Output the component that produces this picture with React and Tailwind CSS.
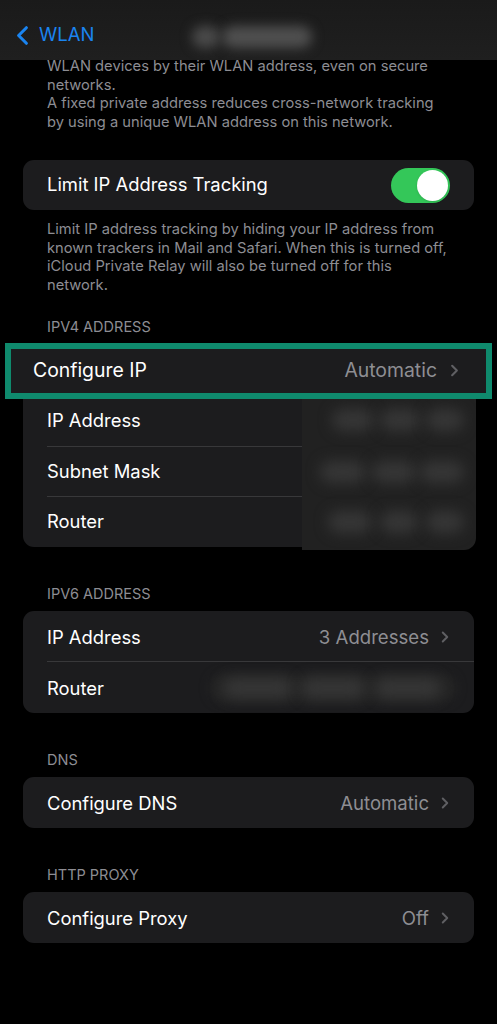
import { ChevronLeft, ChevronRight } from "lucide-react";

const font = { fontFamily: "Inter, 'Open Sans', 'Liberation Sans', sans-serif" };

function SectionHeader({ children }) {
  return (
    <div className="pt-[39px] pb-[9px] px-[47px] text-[14.5px] leading-4 text-[#8d8d93] uppercase">
      {children}
    </div>
  );
}

function Chevron({ big }) {
  return (
    <ChevronRight
      className={big ? "w-[19px] h-[19px] text-[#5f5f63]" : "w-[18px] h-[18px] text-[#5f5f63]"}
      strokeWidth={2.6}
    />
  );
}

function Row({ label, value, blur, last }) {
  return (
    <div className="relative h-[51px] pt-[2px] flex items-center pl-6 pr-[20px]">
      <span className="text-[18.4px] text-white">{label}</span>
      <div className="ml-auto flex items-center gap-[7px]">
        {value && <span className="text-[18.6px] text-[#8e8e93]">{value}</span>}
        {value && <Chevron />}
      </div>
      {blur}
      {!last && <div className="absolute bottom-0 left-6 right-0 h-px bg-[#38383a]" />}
    </div>
  );
}

function BlurBlob({ className }) {
  return <div className={"absolute rounded-full bg-[#363636] blur-[7px] " + className} />;
}

export default function App() {
  return (
    <div className="w-[497px] h-[1024px] bg-black overflow-hidden" style={font}>
      {/* nav bar */}
      <div className="relative h-[60px] bg-gradient-to-b from-[#1a1a1a] to-[#1f1f1f] flex items-center pt-[10px]">
        <div className="flex items-center pl-[7px] text-[#1a84f0]">
          <ChevronLeft className="w-[31px] h-[31px]" strokeWidth={2.4} />
          <span className="ml-[1px] text-[18.5px]">WLAN</span>
        </div>
        <div className="absolute left-[192px] top-[26px] w-[28px] h-[22px] rounded-full bg-[#4a4a4a] blur-[6px]" />
        <div className="absolute left-[222px] top-[26px] w-[90px] h-[22px] rounded-full bg-[#4f4f4f] blur-[6px]" />
      </div>

      <div className="-mt-[3px] px-[47px] text-[14.7px] leading-[18.5px] text-[#8d8d93]">
        <p>WLAN devices by their WLAN address, even on secure networks.</p>
        <p>A fixed private address reduces cross-network tracking by using a unique WLAN address on this network.</p>
      </div>

      {/* limit ip tracking */}
      <div className="mt-[29px] mx-[23px] h-[50px] rounded-[11px] bg-[#1c1c1e] flex items-center pl-6 pr-[24px]">
        <span className="text-[18.4px] text-white">Limit IP Address Tracking</span>
        <div className="ml-auto w-[59px] h-[35px] rounded-full bg-[#34c759] flex items-center justify-end pr-[2px]">
          <div className="w-[31px] h-[31px] rounded-full bg-white shadow" />
        </div>
      </div>
      <p className="mt-[10px] px-[47px] text-[14.7px] leading-[18.5px] text-[#8d8d93]">
        Limit IP address tracking by hiding your IP address from known trackers in Mail and Safari. When this is turned off, iCloud Private Relay will also be turned off for this network.
      </p>

      <div className="pt-[25px] pb-[8px] px-[47px] text-[14.5px] leading-4 text-[#8d8d93] uppercase">
        IPv4 Address
      </div>

      {/* highlighted row */}
      <div className="relative z-10 mx-[5px] h-[56px] border-[6px] border-[#0f8a6d] bg-[#1c1c1e] flex items-center pl-[22px] pr-[22px]">
        <span className="text-[19.4px] text-white">Configure IP</span>
        <div className="ml-auto flex items-center gap-[8px]">
          <span className="text-[19.4px] text-[#8e8e93]">Automatic</span>
          <Chevron big />
        </div>
      </div>

      <div className="relative mx-[23px] rounded-b-[11px] bg-[#1c1c1e]">
        <div className="h-[48px] pb-[5px] flex items-center pl-6 relative">
          <span className="text-[18.4px] text-white">IP Address</span>
          <div className="absolute bottom-0 left-6 w-[255px] h-px bg-[#38383a]" />
        </div>
        <div className="h-[50px] flex items-center pl-6 relative">
          <span className="text-[18.4px] text-white">Subnet Mask</span>
          <div className="absolute bottom-0 left-6 w-[255px] h-px bg-[#38383a]" />
        </div>
        <div className="h-[50px] flex items-center pl-6">
          <span className="text-[18.4px] text-white">Router</span>
        </div>
        {/* blurred values */}
        <div className="absolute top-0 right-[-2px] w-[174px] h-[151px] bg-[#212121] rounded-br-[12px] overflow-hidden">
          <BlurBlob className="left-[30px] top-[10px] w-[42px] h-[22px]" />
          <BlurBlob className="left-[78px] top-[10px] w-[40px] h-[22px]" />
          <BlurBlob className="left-[124px] top-[10px] w-[38px] h-[22px]" />
          <BlurBlob className="left-[18px] top-[62px] w-[46px] h-[22px]" />
          <BlurBlob className="left-[70px] top-[62px] w-[44px] h-[22px]" />
          <BlurBlob className="left-[118px] top-[62px] w-[44px] h-[22px]" />
          <BlurBlob className="left-[26px] top-[112px] w-[44px] h-[22px]" />
          <BlurBlob className="left-[78px] top-[112px] w-[38px] h-[22px]" />
          <BlurBlob className="left-[124px] top-[112px] w-[38px] h-[22px]" />
        </div>
      </div>

      <SectionHeader>IPv6 Address</SectionHeader>
      <div className="mx-[23px] rounded-[11px] bg-[#1c1c1e] overflow-hidden">
        <Row label="IP Address" value="3 Addresses" />
        <Row
          label="Router"
          last
          blur={
            <>
              <div className="absolute left-[186px] top-[11px] w-[248px] h-[30px] rounded-full bg-[#242424] blur-[5px]" />
              <BlurBlob className="left-[200px] top-[16px] w-[70px] h-[20px]" />
              <BlurBlob className="left-[278px] top-[16px] w-[64px] h-[20px]" />
              <BlurBlob className="left-[352px] top-[16px] w-[66px] h-[20px]" />
            </>
          }
        />
      </div>

      <SectionHeader>DNS</SectionHeader>
      <div className="mx-[23px] rounded-[11px] bg-[#1c1c1e]">
        <Row label="Configure DNS" value="Automatic" last />
      </div>

      <SectionHeader>HTTP Proxy</SectionHeader>
      <div className="mx-[23px] rounded-[11px] bg-[#1c1c1e]">
        <Row label="Configure Proxy" value="Off" last />
      </div>
    </div>
  );
}
